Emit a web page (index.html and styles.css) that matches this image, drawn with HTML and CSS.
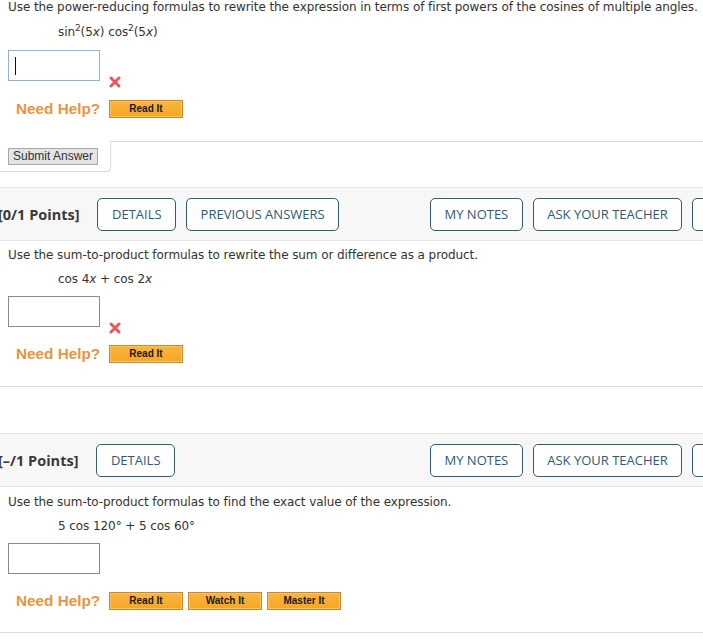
FILE: index.html
```html
<!DOCTYPE html>
<html>
<head>
<meta charset="utf-8">
<link rel="stylesheet" href="styles.css">
</head>
<body>
<div class="page">
  <section class="q q-first">
    <p class="prompt">Use the power-reducing formulas to rewrite the expression in terms of first powers of the cosines of multiple angles.</p>
    <p class="math">sin<sup>2</sup>(5<i>x</i>) cos<sup>2</sup>(5<i>x</i>)</p>
    <div class="answer-row">
      <div class="answer focused"><span class="caret"></span></div>
      <svg class="wrong" width="12" height="12" viewBox="0 0 12 12"><path d="M2 2L10 10M10 2L2 10" stroke="#e8585b" stroke-width="3" stroke-linecap="round"/></svg>
    </div>
    <div class="help-row">
      <span class="need-help">Need Help?</span>
      <span class="help-btn">Read It</span>
    </div>
  </section>

  <div class="submit-row">
    <div class="submit-box"><span class="submit-btn">Submit Answer</span></div>
    <div class="submit-rest"></div>
  </div>

  <header class="qhead">
    <div class="qhead-left">
      <span class="points">[0/1 Points]</span>
      <span class="tbtn">DETAILS</span>
      <span class="tbtn">PREVIOUS ANSWERS</span>
    </div>
    <div class="qhead-right">
      <span class="tbtn">MY NOTES</span>
      <span class="tbtn">ASK YOUR TEACHER</span>
      <span class="tbtn">PRACTICE ANOTHER</span>
    </div>
  </header>
  <section class="q q-second">
    <p class="prompt">Use the sum-to-product formulas to rewrite the sum or difference as a product.</p>
    <p class="math">cos 4<i>x</i> + cos 2<i>x</i></p>
    <div class="answer-row">
      <div class="answer"></div>
      <svg class="wrong" width="12" height="12" viewBox="0 0 12 12"><path d="M2 2L10 10M10 2L2 10" stroke="#e8585b" stroke-width="3" stroke-linecap="round"/></svg>
    </div>
    <div class="help-row">
      <span class="need-help">Need Help?</span>
      <span class="help-btn">Read It</span>
    </div>
  </section>

  <header class="qhead qhead-third">
    <div class="qhead-left">
      <span class="points">[–/1 Points]</span>
      <span class="tbtn">DETAILS</span>
    </div>
    <div class="qhead-right">
      <span class="tbtn">MY NOTES</span>
      <span class="tbtn">ASK YOUR TEACHER</span>
      <span class="tbtn">PRACTICE ANOTHER</span>
    </div>
  </header>
  <section class="q q-third">
    <p class="prompt">Use the sum-to-product formulas to find the exact value of the expression.</p>
    <p class="math">5 cos 120° + 5 cos 60°</p>
    <div class="answer-row">
      <div class="answer"></div>
    </div>
    <div class="help-row">
      <span class="need-help">Need Help?</span>
      <span class="help-btn">Read It</span>
      <span class="help-btn">Watch It</span>
      <span class="help-btn">Master It</span>
    </div>
  </section>
</div>
</body>
</html>
```
FILE: styles.css
```css
html, body {
  margin: 0;
  padding: 0;
  background: #fff;
  overflow: hidden;
}
body {
  font-family: "DejaVu Sans", Verdana, sans-serif;
  font-size: 12px;
  letter-spacing: -0.08px;
  color: #333;
}
.page {
  width: 703px;
}
p { margin: 0; }

.q {
  padding-left: 8px;
  border-bottom: 1px solid #ddd;
}
.q-first { border-bottom: none; padding-top: 0; }
.prompt {
  line-height: 15px;
  white-space: nowrap;
}
.math {
  margin-top: 10px;
  margin-left: 50px;
  line-height: 15px;
}
.math sup {
  font-size: 9px;
  line-height: 0;
  vertical-align: 5px;
}
.math i { font-style: italic; }

.answer-row {
  display: flex;
  align-items: flex-start;
  gap: 9px;
  margin-top: 10px;
}
.answer {
  width: 90px;
  height: 29px;
  border: 1px solid #8a8a8a;
  background: #fff;
  position: relative;
}
.answer.focused { border-color: #8fb3d0; }
.caret {
  position: absolute;
  left: 6px;
  top: 6px;
  width: 1px;
  height: 18px;
  background: #111;
}
.wrong {
  margin-top: 26px;
}

.help-row {
  display: flex;
  align-items: center;
  margin-top: 11px;
  padding-left: 8px;
  height: 18px;
  letter-spacing: 0;
}
.need-help {
  font-family: "Liberation Sans", Arial, sans-serif;
  font-weight: bold;
  font-size: 15.3px;
  color: #ea9440;
  width: 93px;
}
.help-btn {
  box-sizing: border-box;
  width: 74px;
  height: 18px;
  margin-right: 5px;
  border: 1px solid #c98a2f;
  box-shadow: inset 0 0 0 1px #fbc260;
  background: linear-gradient(#f9b540, #f6a623);
  font-family: "Liberation Sans", Arial, sans-serif;
  font-weight: bold;
  font-size: 10px;
  color: #1a1a1a;
  text-align: center;
  line-height: 16px;
}

.q-first .help-row { margin-top: 12px; margin-bottom: 23px; }
.q-second { padding-top: 7px; padding-bottom: 23px; }
.q-second .math, .q-third .math { margin-top: 9px; }
.q-second .answer-row { margin-top: 9px; }
.q-second .help-row { margin-top: 11px; }
.q-third { padding-top: 8px; padding-bottom: 22px; }
.q-third .answer-row { margin-top: 9px; }
.q-third .help-row { margin-top: 18px; }

.submit-row {
  display: flex;
  align-items: flex-start;
  margin-bottom: 15px;
}
.submit-box {
  width: 110px;
  height: 30px;
  border-right: 1px solid #dcdcdc;
  border-bottom: 1px solid #dcdcdc;
  border-bottom-right-radius: 4px;
  padding-left: 8px;
  margin-left: -8px;
  box-sizing: content-box;
  display: flex;
  align-items: flex-start;
}
.submit-rest {
  flex: 1;
  border-top: 1px solid #dcdcdc;
}
.submit-btn {
  margin-left: 8px;
  margin-top: 7px;
  box-sizing: border-box;
  width: 90px;
  height: 17px;
  border: 1px solid #a8a8a8;
  background: #e4e4e4;
  font-family: "Liberation Sans", Arial, sans-serif;
  font-size: 12px;
  letter-spacing: 0;
  color: #333;
  text-align: center;
  line-height: 15px;
}

.qhead {
  display: grid;
  grid-template-columns: 430px auto;
  align-items: center;
  height: 52px;
  background: #f7f7f7;
  border-top: 1px solid #e4e4e4;
  border-bottom: 1px solid #e4e4e4;
  letter-spacing: 0;
}
.qhead-third { margin-top: 46px; }
.qhead-left, .qhead-right {
  display: flex;
  align-items: center;
  gap: 10px;
  white-space: nowrap;
}
.points {
  margin-left: -2px;
  margin-right: 8px;
  font-family: "Open Sans", sans-serif;
  font-weight: bold;
  font-size: 14.5px;
  color: #3a3a3a;
}
.tbtn {
  box-sizing: border-box;
  height: 33px;
  padding: 0 13.5px;
  border: 1px solid #2f5f70;
  border-radius: 5px;
  background: #fff;
  font-family: "Open Sans", sans-serif;
  font-size: 13px;
  color: #2c5b78;
  line-height: 31px;
}
```
